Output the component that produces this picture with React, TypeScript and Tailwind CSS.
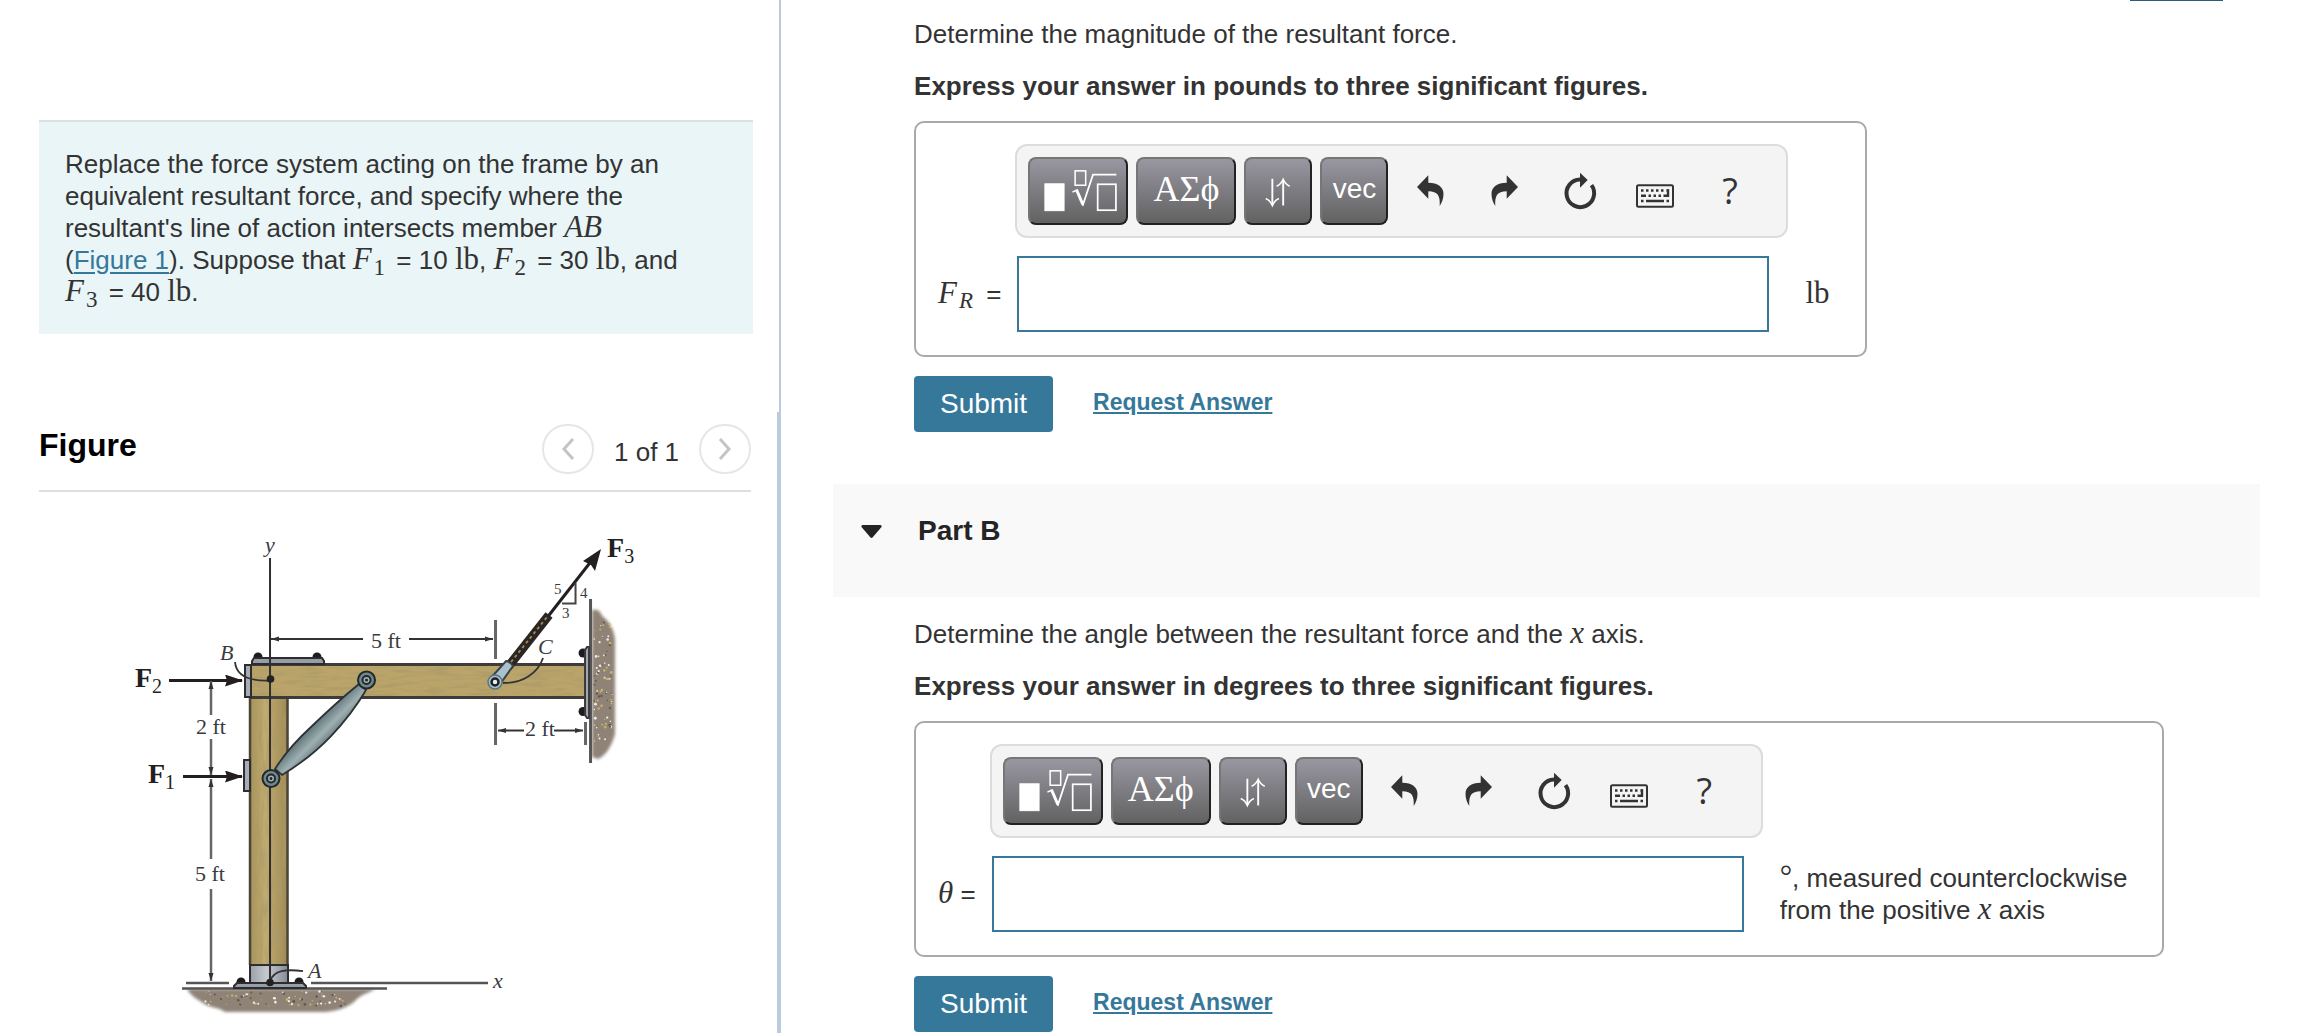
import React from 'react';

interface MathProps {
    children: React.ReactNode;
    sub?: string;
}

// Italic variable
const Var: React.FC<MathProps> = ({ children }) => (
    <span className="font-['Liberation_Serif',serif] text-[31px] leading-[0] italic">{children}</span>
);

const Sub: React.FC<MathProps> = ({ children }) => (
    <sub className="mr-1 ml-0.5 font-['Liberation_Serif',serif] text-[23px]">{children}</sub>
);

const Unit: React.FC<MathProps> = ({ children }) => (
    <span className="font-['Liberation_Serif',serif] text-[31px] leading-[0]">{children}</span>
);

const Force = ({ index, pounds }: { index: number; pounds: number }) => (
    <span className="whitespace-nowrap">
        <Var>F</Var>
        <Sub>{index}</Sub> = {pounds} <Unit>lb</Unit>
    </span>
);

const TemplateIcon = () => (
    <svg viewBox="0 0 100 68" className="h-[68px] w-[100px]" fill="none" stroke="#fff" aria-hidden="true">
        <rect x="15.5" y="26.5" width="20" height="28" fill="#fff" strokeWidth="1" />
        <rect x="47" y="13" width="11" height="15" strokeWidth="1.6" />
        <path d="M44.2 35.2l4.6-2.2" strokeWidth="1.6" />
        <path d="M48.4 32.6L55 48" strokeWidth="3" />
        <path d="M54.8 49.5L65.6 17H90" strokeWidth="1.8" />
        <rect x="70.5" y="27" width="19" height="27" strokeWidth="1.8" />
    </svg>
);

const ArrowsIcon = () => (
    <svg viewBox="0 0 68 68" className="h-[68px] w-[68px]" fill="none" stroke="#fff" strokeWidth="2" aria-hidden="true">
        <path d="M28 21v27M39.5 49.5v-27" />
        <path d="M21 42c3.5 1.5 5.5 4 7 7.5 1.5-3.5 3.5-6 7-7.5M32.5 29c3.5-1.5 5.5-4 7-7.5 1.5 3.5 3.5 6 7 7.5" strokeWidth="1.6" />
    </svg>
);

const UndoIcon = ({ className = '' }: { className?: string }) => (
    <svg viewBox="0 0 40 40" className={`size-10 ${className}`} fill="currentColor" aria-hidden="true">
        <path d="M7 16L18.3 4.3v7.4C28 11.7 33.5 16 33.5 23c0 5-1.8 9-3.8 12C30.3 25 28 20.3 18.3 20.3v7.4z" />
    </svg>
);

const ResetIcon = () => (
    <svg viewBox="0 0 40 40" className="size-10" aria-hidden="true">
        <path d="M20 8.5A13.8 13.8 0 1 0 31.5 14.2" fill="none" stroke="currentColor" strokeWidth="4" />
        <path d="M20 1.7L27.7 9 20 16.7z" fill="currentColor" />
    </svg>
);

const KeyboardIcon = () => (
    <svg viewBox="0 0 40 40" className="size-10" fill="none" stroke="currentColor" aria-hidden="true">
        <rect x="2" y="14.3" width="36" height="21.4" rx="1.5" strokeWidth="2" />
        <path d="M6 19.5h2.5M11 19.5h2.5M16 19.5h2.5M21 19.5h2.5M26 19.5h2.5M31.5 19.5h2.5M6 24.8h5M13.5 24.8H16M18.5 24.8H21M23.5 24.8H26M28.5 24.8h5.5M6 30h2.5M11 30h18M31.5 30h2.5" strokeWidth="2.4" />
        <path d="M33 18.3v7.7" strokeWidth="2.4" />
    </svg>
);

const darkButton =
    'flex h-[68px] shrink-0 items-center justify-center rounded-lg border-2 border-t-[#767676] border-r-[#222] border-b-[#222] border-l-[#767676] bg-linear-to-b from-[#9997a1] to-[#626262] text-white';

const iconButton = 'flex h-[68px] w-[67px] shrink-0 items-center justify-center text-[#333]';

const Toolbar = () => (
    <div className="flex w-[773px] gap-2 rounded-xl border-2 border-[#dcdcdc] bg-[#f4f4f4] p-[11px]">
        <button type="button" aria-label="Templates" className={`w-[100px] ${darkButton}`}>
            <TemplateIcon />
        </button>
        <button type="button" className={`w-[100px] pb-1 font-['Liberation_Serif',serif] text-4xl ${darkButton}`}>
            ΑΣϕ
        </button>
        <button type="button" aria-label="Subscript and superscript" className={`w-[68px] ${darkButton}`}>
            <ArrowsIcon />
        </button>
        <button type="button" className={`w-[68px] pb-1 text-[28px] ${darkButton}`}>
            vec
        </button>
        <div className="flex gap-2">
            <button type="button" aria-label="Undo" className={iconButton}>
                <UndoIcon />
            </button>
            <button type="button" aria-label="Redo" className={iconButton}>
                <UndoIcon className="-scale-x-100" />
            </button>
            <button type="button" aria-label="Reset" className={iconButton}>
                <ResetIcon />
            </button>
            <button type="button" aria-label="Keyboard shortcuts" className={iconButton}>
                <KeyboardIcon />
            </button>
            <button type="button" className={`font-['Open_Sans',sans-serif] text-4xl ${iconButton}`}>
                ?
            </button>
        </div>
    </div>
);

interface AnswerBoxProps {
    id: string;
    label: React.ReactNode;
    unit: React.ReactNode;
}

const AnswerBox: React.FC<AnswerBoxProps> = ({ id, label, unit }) => (
    <div className="w-fit rounded-[10px] border-2 border-[#a9a9a9] pt-[21px] pr-[35px] pb-[23px] pl-[22px]">
        <div className="grid grid-cols-[auto_auto_auto] items-center">
            <div className="col-span-2 col-start-2 -mr-5 mb-[18px]">
                <Toolbar />
            </div>
            <label htmlFor={id} className="pr-3.5 whitespace-nowrap">
                {label} =
            </label>
            <input id={id} type="text" className="ml-0.5 h-[76px] w-[752px] border-2 border-[#37789b] px-3 outline-none" />
            <span className="pl-9 leading-8">{unit}</span>
        </div>
    </div>
);

const SubmitRow = () => (
    <div className="mt-[19px] flex items-center gap-10">
        <button type="submit" className="h-14 w-[139px] rounded-sm bg-[#36789a] text-[28px] text-white">
            Submit
        </button>
        <a href="#" className="pb-1 text-[23px] font-bold text-[#36789a] underline underline-offset-2">
            Request Answer
        </a>
    </div>
);

// Small seeded generator so the ground speckles stay put between renders
const speckles = (count: number, x: number, y: number, w: number, h: number, seed: number) => {
    let s = seed;
    const next = () => {
        s = (s * 16807) % 2147483647;
        return s / 2147483647;
    };
    return Array.from({ length: count }, () => ({ x: x + next() * w, y: y + next() * h, r: 0.5 + next() * 0.9, c: next() }));
};

const speckleColor = (c: number) => (c > 0.6 ? '#f1eee6' : c > 0.25 ? '#c9b069' : '#62584c');

const wallSpeckles = speckles(85, 594, 622, 18, 120, 77);
const groundSpeckles = speckles(75, 205, 991, 145, 15, 431);

const FrameFigure = () => (
    <svg viewBox="39 492 712 541" className="w-full" role="img" aria-label="Frame with forces F1, F2 and F3" fontFamily="'Liberation Serif', serif" fill="#3a3a3f">
        <defs>
            <linearGradient id="steel" x1="0" x2="1">
                <stop offset="0" stopColor="#9aa0a8" />
                <stop offset="0.45" stopColor="#c6cad0" />
                <stop offset="1" stopColor="#858b95" />
            </linearGradient>
            <linearGradient id="brace" x1="0" y1="0" x2="1" y2="1">
                <stop offset="0.4" stopColor="#4d6268" />
                <stop offset="0.53" stopColor="#9fb0b3" />
                <stop offset="0.62" stopColor="#5e7378" />
            </linearGradient>
            <linearGradient id="post" x1="0" x2="1">
                <stop offset="0" stopColor="#a8935a" />
                <stop offset="0.4" stopColor="#c0ab70" />
                <stop offset="1" stopColor="#a08a54" />
            </linearGradient>
            <filter id="grainH" x="0" y="0" width="1" height="1">
                <feTurbulence type="fractalNoise" baseFrequency="0.04 0.3" numOctaves="3" seed="4" />
                <feColorMatrix values="0 0 0 0 0.4  0 0 0 0 0.32  0 0 0 0 0.14  3.4 0 0 0 -1.5" />
                <feComposite in2="SourceGraphic" operator="in" />
            </filter>
            <filter id="grainV" x="0" y="0" width="1" height="1">
                <feTurbulence type="fractalNoise" baseFrequency="0.3 0.04" numOctaves="3" seed="9" />
                <feColorMatrix values="0 0 0 0 0.4  0 0 0 0 0.32  0 0 0 0 0.14  3.4 0 0 0 -1.5" />
                <feComposite in2="SourceGraphic" operator="in" />
            </filter>
            <filter id="soft" x="-0.1" y="-0.1" width="1.2" height="1.2">
                <feGaussianBlur stdDeviation="1.6" />
            </filter>
            <marker id="tip" viewBox="0 0 8 6" refX="8" refY="3" markerWidth="8" markerHeight="6" markerUnits="userSpaceOnUse" orient="auto">
                <path d="M0 0.500L8 3 0 5.500z" fill="#333" />
            </marker>
            <marker id="head" viewBox="0 0 18 12" refX="17" refY="6" markerWidth="18" markerHeight="12" markerUnits="userSpaceOnUse" orient="auto">
                <path d="M0 0L18 6 0 12l2-6z" fill="#231f20" />
            </marker>
        </defs>

        {/* Wall and ground */}
        <path d="M592 610c5-1 8 0 10 6 6 4 12 12 13 24v94c-4 14-10 22-17 25l-6-2z" fill="#8f8377" filter="url(#soft)" />
        <path d="M187 989h188c-8 5-14 5-20 12-8 7-18 10-30 11h-100c-6-5-16-4-22-9-6-4-12-7-16-14z" fill="#8f8377" filter="url(#soft)" />
        {wallSpeckles.map((p, i) => (
            <circle key={`wall-${i}`} cx={p.x} cy={p.y} r={p.r} fill={speckleColor(p.c)} />
        ))}
        {groundSpeckles.map((p, i) => (
            <circle key={`ground-${i}`} cx={p.x} cy={p.y} r={p.r} fill={speckleColor(p.c)} />
        ))}
        <path d="M590.5 599v164" stroke="#555" strokeWidth="3" />
        <path d="M182 988.5h205" stroke="#555" strokeWidth="2.5" />

        {/* Post */}
        <rect x="250.5" y="697" width="37" height="268" fill="url(#post)" />
        <rect x="250.5" y="697" width="37" height="268" filter="url(#grainV)" opacity="0.7" />
        <path d="M250 697v268M287.5 697v268" stroke="#4a4439" strokeWidth="2.5" />
        <rect x="250" y="965" width="38" height="19" fill="url(#steel)" stroke="#2d2d30" strokeWidth="2" />
        <circle cx="241" cy="982" r="4.5" fill="#1d1d1f" />
        <circle cx="299" cy="982" r="4.5" fill="#1d1d1f" />
        <path d="M234 988v-2l3-3h66l3 3v2z" fill="#989ea8" stroke="#2d2d30" strokeWidth="2" />

        {/* Beam */}
        <rect x="251" y="664" width="335" height="34" fill="#baa469" />
        <rect x="251" y="664" width="335" height="34" filter="url(#grainH)" opacity="0.7" />
        <path d="M251 664.5h335M251 697.5h335" stroke="#3f3b38" strokeWidth="3" />
        <path d="M251 664v34" stroke="#3f3b38" strokeWidth="2" />
        <circle cx="258" cy="657" r="4.5" fill="#1d1d1f" />
        <circle cx="317" cy="657" r="4.5" fill="#1d1d1f" />
        <path d="M252 664v-3l2-3h68l2 3v3z" fill="#989ea8" stroke="#2d2d30" strokeWidth="2" />
        <rect x="245" y="665" width="6" height="32" fill="#a8adb5" stroke="#2d2d30" strokeWidth="2" />
        <rect x="244" y="760" width="6" height="31" fill="#a8adb5" stroke="#2d2d30" strokeWidth="2" />
        <circle cx="583" cy="653" r="4.5" fill="#1d1d1f" />
        <circle cx="583" cy="711.5" r="4.5" fill="#1d1d1f" />
        <path d="M589 647h-2l-2 3v65l2 3h2z" fill="#a3a9b2" stroke="#3a3a3d" strokeWidth="2" />

        {/* Axes */}
        <path d="M270 558v425" stroke="#2f2f31" strokeWidth="2" />
        <path d="M186 983h43M311 983h177" stroke="#555" strokeWidth="2.5" />

        {/* Brace */}
        <path d="M275 769Q288 748 312 726Q338 701 359 684L366 690Q352 714 331 736Q310 758 282 775z" fill="url(#brace)" stroke="#2c3336" strokeWidth="1.8" />
        {[[366.5, 680], [271, 778.5]].map(([cx, cy]) => (
            <g key={cx} stroke="#20292c">
                <circle cx={cx} cy={cy} r="8.5" fill="#71878c" strokeWidth="2" />
                <circle cx={cx} cy={cy} r="4" fill="#aab4b6" strokeWidth="2" />
                <circle cx={cx} cy={cy} r="1" fill="#20292c" />
            </g>
        ))}

        {/* Rod, rope and force F3 */}
        <path d="M546 619L596 555" stroke="#231f20" strokeWidth="3" />
        <path d="M601 549l-6 22-4-6-8-4z" fill="#231f20" />
        <path d="M508 667L549 615" stroke="#2b2623" strokeWidth="9" />
        <path d="M511 662L547 617" stroke="#a08c58" strokeWidth="1.8" strokeDasharray="3 3" />
        <path d="M489 680l17-19q5 1 7 5l-15 21z" fill="#a9c0cd" stroke="#39434a" strokeWidth="2" />
        <circle cx="495" cy="682" r="7" fill="#a9c0cd" stroke="#5c7482" strokeWidth="1.5" />
        <circle cx="495" cy="682" r="3.5" fill="#e9edf0" stroke="#1f2224" strokeWidth="2.5" />
        <path d="M562 603.5h13.5V583" fill="none" stroke="#444" strokeWidth="2" />

        {/* Horizontal forces */}
        <path d="M169 680.5h73" stroke="#231f20" strokeWidth="3" markerEnd="url(#head)" />
        <path d="M183 776.5h59" stroke="#231f20" strokeWidth="3" markerEnd="url(#head)" />

        {/* Dimension lines */}
        <g stroke="#666" strokeWidth="2.5">
            <path d="M211 715v-34" markerEnd="url(#tip)" />
            <path d="M211 739v36" markerEnd="url(#tip)" />
            <path d="M211 859v-80" markerEnd="url(#tip)" />
            <path d="M211 889v92" markerEnd="url(#tip)" />
            <path d="M495.5 620v39M495.5 703v42M585.5 722v23" strokeWidth="3" />
        </g>
        <g stroke="#333" strokeWidth="2">
            <path d="M363 639h-92" markerEnd="url(#tip)" />
            <path d="M409 639h84" markerEnd="url(#tip)" />
            <path d="M524 730.5h-26" markerEnd="url(#tip)" />
            <path d="M554 730.5h29" markerEnd="url(#tip)" />
        </g>

        {/* Leaders */}
        <g fill="none" stroke="#333" strokeWidth="1.8">
            <path d="M235 662c1 12 10 19 33 18.5" />
            <path d="M503 683c20 0 35-10 40-25" />
            <path d="M270 981c4-11 16-12 33-10" />
        </g>
        <circle cx="270.5" cy="679" r="3.8" fill="#222" />
        <circle cx="270" cy="982.5" r="3.8" fill="#222" />

        {/* Labels */}
        <g fontSize="22" fontStyle="italic">
            <text x="265" y="552">y</text>
            <text x="220" y="660">B</text>
            <text x="538" y="654">C</text>
            <text x="308" y="978">A</text>
            <text x="493" y="988">x</text>
        </g>
        <g fontSize="22">
            <text x="371" y="648">5 ft</text>
            <text x="525" y="736">2 ft</text>
            <text x="196" y="734">2 ft</text>
            <text x="195" y="881">5 ft</text>
        </g>
        <g fontSize="15">
            <text x="554" y="594">5</text>
            <text x="580" y="598">4</text>
            <text x="562" y="618">3</text>
        </g>
        <g fontSize="28" fontWeight="bold" fill="#231f20">
            <text x="135" y="687">F<tspan dy="6" fontSize="20" fontWeight="normal">2</tspan></text>
            <text x="148" y="783">F<tspan dy="6" fontSize="20" fontWeight="normal">1</tspan></text>
            <text x="607" y="557">F<tspan dy="6" fontSize="20" fontWeight="normal">3</tspan></text>
        </g>
    </svg>
);

const circleButton = 'flex h-[50px] w-[52px] items-center justify-center rounded-full border-2 border-[#e6e6e6] text-[#c4c4c4]';

const ProblemPanel = () => (
    <aside className="flex w-[33.9%] shrink-0 flex-col">
        <div className="border-r-2 border-[#bccadd] pt-[120px] pr-[26px] pb-[78px] pl-[39px]">
            <p className="border-t-2 border-[#dcdfdf] bg-[#e9f5f7] px-[26px] pt-[26px] pb-[26px] text-[26px] leading-8">
                Replace the force system acting on the frame by an equivalent resultant force, and specify where the
                resultant's line of action intersects member <Var>AB</Var>{' '}
                <span className="whitespace-nowrap">
                    (<a href="#figure" className="text-[#36789a] underline underline-offset-3">Figure 1</a>).
                </span>{' '}
                Suppose that <Force index={1} pounds={10} />, <Force index={2} pounds={30} />, and{' '}
                <Force index={3} pounds={40} />.
            </p>
        </div>
        <section id="figure" className="grow border-r-4 border-[#bccadd] pr-[26px] pl-[39px]">
            <div className="flex items-center border-b-2 border-[#dedede] pt-3 pb-4">
                <h2 className="mr-auto pb-2 text-[32px] leading-10 font-bold text-black">Figure</h2>
                <button type="button" aria-label="Previous figure" className={circleButton}>
                    <svg viewBox="0 0 14 22" className="h-[22px] w-3.5" fill="none" stroke="currentColor" strokeWidth="3" aria-hidden="true">
                        <path d="M12 1L3 11l9 10" />
                    </svg>
                </button>
                <span className="px-5 pt-1.5 text-[26px]">1 of 1</span>
                <button type="button" aria-label="Next figure" className={circleButton}>
                    <svg viewBox="0 0 14 22" className="h-[22px] w-3.5" fill="none" stroke="currentColor" strokeWidth="3" aria-hidden="true">
                        <path d="M2 1l9 10-9 10" />
                    </svg>
                </button>
            </div>
            <FrameFigure />
        </section>
    </aside>
);

export default function App() {
    return (
        <div className="flex min-h-screen overflow-hidden bg-white font-['Liberation_Sans',Arial,sans-serif] text-[26px] text-[#333]">
            <ProblemPanel />
            <main className="grow pr-11 pl-[52px]">
                <div className="mr-[37px] ml-auto h-px w-[93px] bg-[#2a5d78]" />
                <form className="pt-[17px] pl-[81px]">
                    <p className="leading-8">Determine the magnitude of the resultant force.</p>
                    <p className="mt-5 mb-[19px] leading-8 font-bold">Express your answer in pounds to three significant figures.</p>
                    <AnswerBox
                        id="force"
                        label={
                            <>
                                <Var>F</Var>
                                <Sub>
                                    <i className="pr-0.5">R</i>
                                </Sub>
                            </>
                        }
                        unit={<Unit>lb</Unit>}
                    />
                    <SubmitRow />
                </form>
                <div className="mt-[52px] flex h-[113px] items-start bg-[#f9f9f9] pt-[26px] pl-7">
                    <button type="button" className="flex items-center gap-9 text-[28px] font-bold text-[#242424]">
                        <svg viewBox="0 0 21 13" className="h-[13px] w-[21px]" fill="currentColor" aria-hidden="true">
                            <path d="M1.5 0h18q1.5 0.500 1 2L11.5 12.5q-1 0.800-2 0L0.500 2q-0.500-1.500 1-2z" />
                        </svg>
                        Part B
                    </button>
                </div>
                <form className="pt-[21px] pl-[81px]">
                    <p className="leading-8">
                        Determine the angle between the resultant force and the <Var>x</Var> axis.
                    </p>
                    <p className="mt-5 mb-[19px] leading-8 font-bold">Express your answer in degrees to three significant figures.</p>
                    <AnswerBox
                        id="angle"
                        label={<Var>θ</Var>}
                        unit={
                            <>
                                <Unit>°</Unit>, measured counterclockwise
                                <br />
                                from the positive <Var>x</Var> axis
                            </>
                        }
                    />
                    <SubmitRow />
                </form>
            </main>
        </div>
    );
}
